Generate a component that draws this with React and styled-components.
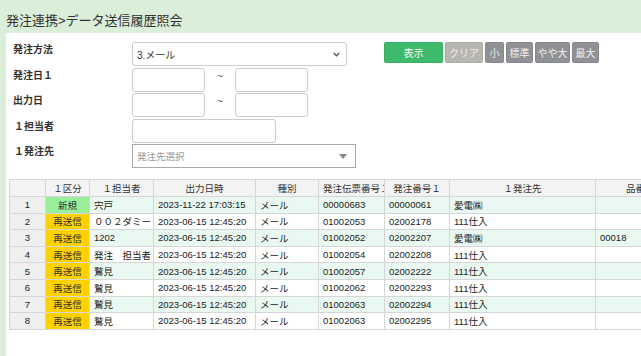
import React from "react";
import styled, { createGlobalStyle } from "styled-components";

const FONT = `"Liberation Sans", "Noto Sans CJK JP", sans-serif`;

const GlobalStyle = createGlobalStyle`
  html, body {
    margin: 0;
    padding: 0;
  }
  body {
    background: #daeeda;
    font-family: ${FONT};
    color: #333;
    overflow: hidden;
  }
`;

const Page = styled.div`
  width: 641px;
  height: 356px;
  overflow: hidden;
`;

const TitleBar = styled.div`
  height: 33px;
  box-sizing: border-box;
  padding: 6px 0 0 6px;
  display: flex;
  align-items: center;
  font-size: 13px;
  color: #333;
`;

const Panel = styled.div`
  margin-left: 6px;
  height: 323px;
  box-sizing: border-box;
  padding: 9px 0 0 3px;
  background: #fff;
  overflow: hidden;
`;

const Form = styled.div`
  display: grid;
  grid-template-columns: 119px auto;
  grid-auto-rows: 24px;
  row-gap: 1.5px;
  padding-left: 4px;
`;

const Label = styled.div`
  font-size: 10px;
  font-weight: bold;
  line-height: 16px;
  color: #333;
  padding-left: ${(p) => (p.$indent ? "1px" : "0")};
`;

const Field = styled.div`
  display: flex;
  align-items: flex-start;
`;

const Select = styled.div`
  width: 215px;
  height: 24px;
  box-sizing: border-box;
  border: 1px solid #ccc;
  border-radius: 3px;
  display: flex;
  align-items: center;
  justify-content: space-between;
  padding: 0 6px 0 4px;
  font-size: 10px;
  color: #333;
`;

const Input = styled.div`
  width: ${(p) => p.$w}px;
  height: 24px;
  box-sizing: border-box;
  border: 1px solid #ccc;
  border-radius: 3px;
`;

const Tilde = styled.div`
  width: 30px;
  text-align: center;
  font-size: 11px;
  line-height: 17px;
  color: #555;
`;

const Picker = styled.div`
  width: 224px;
  height: 24px;
  box-sizing: border-box;
  border: 1px solid #aaa;
  display: flex;
  align-items: center;
  justify-content: space-between;
  padding: 0 8px 0 4px;
  font-size: 9.5px;
  color: #999;
`;

const Caret = styled.span`
  width: 0;
  height: 0;
  border-left: 4px solid transparent;
  border-right: 4px solid transparent;
  border-top: 5px solid #888;
`;

const Buttons = styled.div`
  display: flex;
  gap: 2px;
  margin-left: 37px;
`;

const BUTTON_BG = {
  primary: "#3dba6b",
  clear: "#b7b6b1",
  size: "#8f9196",
};

const Button = styled.button`
  width: ${(p) => p.$w}px;
  height: 21px;
  padding: 0;
  border: 1px solid rgba(0, 0, 0, 0.06);
  border-radius: 2px;
  background: ${(p) => BUTTON_BG[p.$kind]};
  color: ${(p) => (p.$kind === "primary" ? "#fff" : "#f0f0f0")};
  font-family: ${FONT};
  font-size: 10px;
  white-space: nowrap;
`;

const TableWrap = styled.div`
  margin-top: 11px;
  overflow: hidden;
`;

const Table = styled.table`
  border-collapse: collapse;
  table-layout: fixed;
  width: 666px;
  font-size: 9.5px;
  color: #222;
`;

const Head = styled.th`
  height: 16px;
  padding: 0 4px;
  border: 1px solid #d6d6d6;
  background: #f3f3f3;
  font-weight: normal;
  text-align: center;
  white-space: nowrap;
  overflow: hidden;
  color: #333;
`;

const Row = styled.tr`
  height: 16.6px;
  background: ${(p) => (p.$alt ? "#e9f8f0" : "#fff")};
`;

const Cell = styled.td`
  padding: 0 4px;
  border: 1px solid #d6d6d6;
  white-space: nowrap;
  overflow: hidden;
`;

const NumCell = styled(Cell)`
  background: #efefef;
  text-align: center;
`;

const KubunCell = styled(Cell)`
  background: ${(p) => (p.$kind === "新規" ? "#99ef99" : "#ffd200")};
  text-align: center;
  color: #333;
`;

const Chevron = () => (
  <svg width="7" height="5" viewBox="0 0 7 5">
    <path d="M0.8 1 L3.5 3.8 L6.2 1" fill="none" stroke="#444" strokeWidth="1.2" />
  </svg>
);

const COLS = [36, 44, 64, 102, 63, 66, 65, 146, 80];
const HEADS = ["", "１区分", "１担当者", "出力日時", "種別", "発注伝票番号１", "発注番号１", "１発注先", "品番"];

const RESEND = "2023-06-15 12:45:20";
const ROWS = [
  ["新規", "宍戸", "2023-11-22 17:03:15", "00000683", "00000061", "愛電㈱", ""],
  ["再送信", "００２ダミー", RESEND, "01002053", "02002178", "111仕入", ""],
  ["再送信", "1202", RESEND, "01002052", "02002207", "愛電㈱", "00018"],
  ["再送信", "発注　担当者", RESEND, "01002054", "02002208", "111仕入", ""],
  ["再送信", "鷲見", RESEND, "01002057", "02002222", "111仕入", ""],
  ["再送信", "鷲見", RESEND, "01002062", "02002293", "111仕入", ""],
  ["再送信", "鷲見", RESEND, "01002063", "02002294", "111仕入", ""],
  ["再送信", "鷲見", RESEND, "01002063", "02002295", "111仕入", ""],
];

export default function App() {
  return (
    <Page>
      <GlobalStyle />
      <TitleBar>発注連携&gt;データ送信履歴照会</TitleBar>
      <Panel>
        <Form>
          <Label>発注方法</Label>
          <Field>
            <Select>
              <span>3.メール</span>
              <Chevron />
            </Select>
            <Buttons>
              <Button $kind="primary" $w={59}>表示</Button>
              <Button $kind="clear" $w={38}>クリア</Button>
              <Button $kind="size" $w={19}>小</Button>
              <Button $kind="size" $w={27}>標準</Button>
              <Button $kind="size" $w={35}>やや大</Button>
              <Button $kind="size" $w={27}>最大</Button>
            </Buttons>
          </Field>

          <Label>発注日１</Label>
          <Field>
            <Input $w={73} />
            <Tilde>~</Tilde>
            <Input $w={73} />
          </Field>

          <Label>出力日</Label>
          <Field>
            <Input $w={73} />
            <Tilde>~</Tilde>
            <Input $w={73} />
          </Field>

          <Label $indent>１担当者</Label>
          <Field>
            <Input $w={144} />
          </Field>

          <Label $indent>１発注先</Label>
          <Field>
            <Picker>
              <span>発注先選択</span>
              <Caret />
            </Picker>
          </Field>
        </Form>

        <TableWrap>
          <Table>
            <colgroup>
              {COLS.map((w, i) => (
                <col key={i} style={{ width: w }} />
              ))}
            </colgroup>
            <thead>
              <tr>
                {HEADS.map((h, i) => (
                  <Head key={i}>{h}</Head>
                ))}
              </tr>
            </thead>
            <tbody>
              {ROWS.map((r, i) => (
                <Row key={i} $alt={i % 2 === 0}>
                  <NumCell>{i + 1}</NumCell>
                  <KubunCell $kind={r[0]}>{r[0]}</KubunCell>
                  <Cell>{r[1]}</Cell>
                  <Cell>{r[2]}</Cell>
                  <Cell>メール</Cell>
                  <Cell>{r[3]}</Cell>
                  <Cell>{r[4]}</Cell>
                  <Cell>{r[5]}</Cell>
                  <Cell>{r[6]}</Cell>
                </Row>
              ))}
            </tbody>
          </Table>
        </TableWrap>
      </Panel>
    </Page>
  );
}
